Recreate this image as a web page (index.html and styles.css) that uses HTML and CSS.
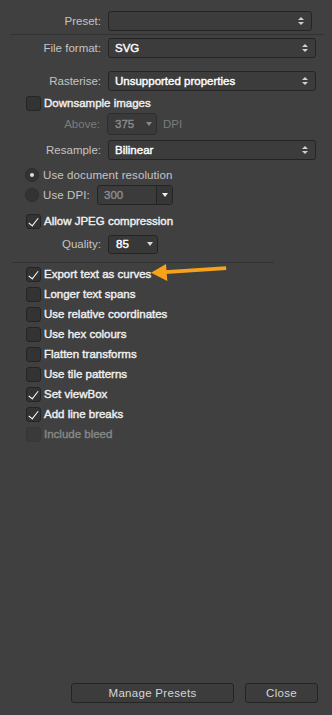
FILE: index.html
```html
<!DOCTYPE html>
<html lang="en">
<head>
  <meta charset="UTF-8">
  <title>Export SVG</title>
  <link rel="stylesheet" href="styles.css">
</head>
<body>
<div class="export-panel">
  <div class="field-row preset-row">
    <label class="field-label">Preset:</label>
    <div class="select select-preset"><span class="select-value"></span><span class="updown"></span></div>
  </div>

  <div class="divider"></div>

  <div class="field-row">
    <label class="field-label">File format:</label>
    <div class="select"><span class="select-value">SVG</span><span class="updown"></span></div>
  </div>

  <div class="field-row spaced">
    <label class="field-label">Rasterise:</label>
    <div class="select"><span class="select-value">Unsupported properties</span><span class="updown"></span></div>
  </div>

  <div class="check-row first-check">
    <span class="checkbox"></span>
    <span class="check-label">Downsample images</span>
  </div>

  <div class="field-row above-row">
    <label class="field-label dim">Above:</label>
    <div class="mini-select dim-select"><span>375</span><span class="tri"></span></div>
    <span class="unit">DPI</span>
  </div>

  <div class="field-row resample-row">
    <label class="field-label">Resample:</label>
    <div class="select"><span class="select-value">Bilinear</span><span class="updown"></span></div>
  </div>

  <div class="radio-row doc-row">
    <span class="radio selected"></span>
    <span class="radio-label">Use document resolution</span>
  </div>
  <div class="radio-row dpi-row">
    <span class="radio"></span>
    <span class="radio-label dpi-label">Use DPI:</span>
    <div class="combo"><span class="combo-value">300</span><span class="combo-btn"><span class="tri white"></span></span></div>
  </div>

  <div class="check-row jpeg-row">
    <span class="checkbox checked"></span>
    <span class="check-label">Allow JPEG compression</span>
  </div>

  <div class="field-row quality-row">
    <label class="field-label">Quality:</label>
    <div class="mini-select"><span>85</span><span class="tri"></span></div>
  </div>

  <div class="divider short"></div>

  <div class="options">
    <div class="check-row">
      <span class="checkbox checked"></span>
      <span class="check-label">Export text as curves</span>
      <svg class="arrow" width="80" height="22" viewBox="0 0 80 22">
        <path d="M14 7.2 L75 3.2 L75.3 7 L14.3 11 Z" fill="#f7a21b"/>
        <path d="M0 9.8 L15 1 L16.3 18 Z" fill="#f7a21b"/>
      </svg>
    </div>
    <div class="check-row"><span class="checkbox"></span><span class="check-label">Longer text spans</span></div>
    <div class="check-row"><span class="checkbox"></span><span class="check-label">Use relative coordinates</span></div>
    <div class="check-row"><span class="checkbox"></span><span class="check-label">Use hex colours</span></div>
    <div class="check-row"><span class="checkbox"></span><span class="check-label">Flatten transforms</span></div>
    <div class="check-row"><span class="checkbox"></span><span class="check-label">Use tile patterns</span></div>
    <div class="check-row"><span class="checkbox checked"></span><span class="check-label">Set viewBox</span></div>
    <div class="check-row"><span class="checkbox checked"></span><span class="check-label">Add line breaks</span></div>
    <div class="check-row disabled"><span class="checkbox"></span><span class="check-label">Include bleed</span></div>
  </div>

  <div class="footer">
    <button class="btn btn-manage">Manage Presets</button>
    <button class="btn btn-close">Close</button>
  </div>
</div>
</body>
</html>
```

FILE: styles.css
```css
:root {
  --bg: #404040;
  --field-bg: #3c3c3c;
  --border-dark: #242424;
  --line: #333333;
  --text: #f0f0f0;
  --label: #c4c4c4;
  --dim: #7c7c7c;
}

* {
  box-sizing: border-box;
  margin: 0;
  padding: 0;
}

body {
  background: var(--bg);
  font-family: "Liberation Sans", Arial, sans-serif;
  font-size: 11px;
  color: var(--text);
  width: 332px;
  height: 715px;
  overflow: hidden;
}

.export-panel {
  height: 715px;
  display: flex;
  flex-direction: column;
  padding-top: 11px;
}

.field-row {
  display: flex;
  align-items: center;
  height: 20px;
}

.field-label {
  width: 101px;
  text-align: right;
  color: var(--label);
  margin-right: 7px;
  font-size: 11.5px;
}

.field-label.dim {
  color: var(--dim);
  width: 100px;
}

.select {
  width: 208px;
  height: 20px;
  border: 1px solid var(--border-dark);
  border-radius: 3px;
  background: var(--field-bg);
  display: flex;
  align-items: center;
  justify-content: space-between;
  padding: 0 7px 0 6px;
}

.select-preset {
  width: 204px;
}

.select-value {
  color: #ffffff;
  font-size: 11.5px;
  -webkit-text-stroke: 0.4px #ffffff;
}

.updown {
  width: 6px;
  height: 10px;
  position: relative;
}

.updown::before,
.updown::after {
  content: "";
  position: absolute;
  left: 0;
  border-left: 3px solid transparent;
  border-right: 3px solid transparent;
}

.updown::before {
  top: 1px;
  border-bottom: 3px solid #d0d0d0;
}

.updown::after {
  bottom: 1px;
  border-top: 3px solid #d0d0d0;
}

.divider {
  height: 1px;
  background: var(--line);
  margin: 3px 7px 3px 10px;
}

.divider.short {
  margin: 8px 58px 1px 12px;
}

.spaced {
  margin-top: 13px;
}

.check-row {
  display: flex;
  align-items: center;
  height: 20px;
  padding-left: 26px;
  position: relative;
}

.first-check {
  margin-top: 2px;
}

.checkbox {
  width: 15px;
  height: 15px;
  border: 1px solid var(--border-dark);
  border-radius: 3px;
  background: #333333;
  margin-right: 3px;
  position: relative;
  flex: none;
}

.checkbox.checked::after {
  content: "";
  position: absolute;
  left: 4px;
  top: 1px;
  width: 4px;
  height: 9px;
  border-right: 1.5px solid #ffffff;
  border-bottom: 1.5px solid #ffffff;
  transform: rotate(38deg);
}

.check-label {
  color: var(--text);
  font-size: 11.5px;
  -webkit-text-stroke: 0.4px var(--text);
}

.check-row.disabled .checkbox {
  background: #3a3a3a;
  border-color: #363636;
}

.check-row.disabled .check-label {
  color: #878787;
  -webkit-text-stroke: 0.4px #878787;
}

.above-row {
  height: 22px;
}

.mini-select {
  width: 50px;
  height: 19px;
  border: 1px solid var(--border-dark);
  border-radius: 3px;
  background: #383838;
  display: flex;
  align-items: center;
  justify-content: space-between;
  padding: 0 4px 0 7px;
  color: #ffffff;
  font-size: 11.5px;
  -webkit-text-stroke: 0.4px #ffffff;
}

.mini-select.dim-select {
  height: 22px;
  background: #3a3a3a;
  color: #8a8a8a;
  -webkit-text-stroke: 0.4px #8a8a8a;
  border-color: #2e2e2e;
}

.tri {
  width: 0;
  height: 0;
  border-left: 3px solid transparent;
  border-right: 3px solid transparent;
  border-top: 4px solid #d8d8d8;
}

.dim-select .tri {
  border-top-color: #8a8a8a;
}

.unit {
  color: var(--dim);
  margin-left: 6px;
  font-size: 11.5px;
}

.resample-row {
  margin-top: 5px;
}

.radio-row {
  display: flex;
  align-items: center;
  height: 19px;
  padding-left: 25px;
}

.doc-row {
  margin-top: 5px;
}

.radio {
  width: 14px;
  height: 14px;
  border-radius: 50%;
  background: #333333;
  border: 1px solid #2c2c2c;
  margin-right: 4px;
  position: relative;
  flex: none;
}

.radio.selected::after {
  content: "";
  position: absolute;
  left: 4px;
  top: 4px;
  width: 4px;
  height: 4px;
  border-radius: 50%;
  background: #e0e0e0;
}

.radio-label {
  color: var(--label);
  font-size: 11.5px;
  letter-spacing: 0.1px;
}

.dpi-row {
  height: 22px;
}

.dpi-label {
  width: 54px;
}

.combo {
  width: 76px;
  height: 20px;
  border: 1px solid var(--border-dark);
  border-radius: 3px;
  background: #3b3b3b;
  display: flex;
}

.combo-value {
  flex: 1;
  padding-left: 6px;
  line-height: 18px;
  font-size: 11.5px;
  color: #8c8c8c;
  -webkit-text-stroke: 0.4px #8c8c8c;
}

.combo-btn {
  width: 16px;
  border-left: 1px solid var(--border-dark);
  background: #363636;
  display: flex;
  align-items: center;
  justify-content: center;
}

.tri.white {
  border-top-color: #f0f0f0;
  border-left-width: 3.5px;
  border-right-width: 3.5px;
}

.jpeg-row {
  margin-top: 5px;
}

.quality-row {
  margin-top: 3px;
}

.options {
  display: flex;
  flex-direction: column;
}

.arrow {
  position: absolute;
  left: 151px;
  top: -1px;
}

.footer {
  margin-top: auto;
  margin-bottom: 12px;
  display: flex;
  justify-content: flex-end;
  gap: 11px;
  padding-right: 14px;
}

.btn {
  height: 20px;
  border: 1px solid var(--border-dark);
  border-radius: 3px;
  background: #3c3c3c;
  color: #d6d6d6;
  font-family: "Liberation Sans", Arial, sans-serif;
  font-size: 11.5px;
  letter-spacing: 0.3px;
}

.btn-manage {
  width: 163px;
}

.btn-close {
  width: 73px;
}
```
